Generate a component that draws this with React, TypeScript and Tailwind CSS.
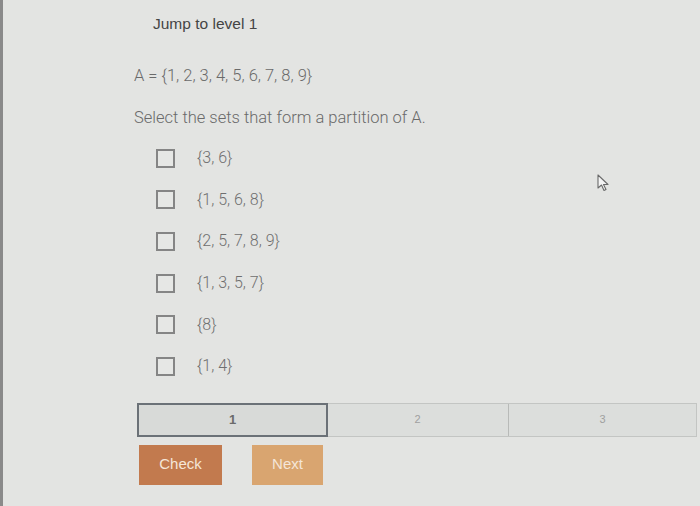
import React from "react";

const options = ["{3, 6}", "{1, 5, 6, 8}", "{2, 5, 7, 8, 9}", "{1, 3, 5, 7}", "{8}", "{1, 4}"];

export default function App() {
  return (
    <div className="relative w-[700px] h-[506px] overflow-hidden bg-[#e3e4e2] border-l-[3px] border-[#8a8a8a]">
      <div className="pl-[150px] pt-[12px] text-[15.5px] text-[#454545] font-['Liberation_Sans',Arial,sans-serif]">
        Jump to level 1
      </div>
      <div className="pl-[131px] pt-[29px] text-[16.5px] text-[#6a6a6a] font-['Roboto',sans-serif] font-light">
        A = {"{1, 2, 3, 4, 5, 6, 7, 8, 9}"}
      </div>
      <div className="pl-[131px] pt-[17px] text-[16.5px] text-[#6a6a6a] font-['Roboto',sans-serif] font-light">
        Select the sets that form a partition of A.
      </div>
      <div className="flex flex-col gap-[22.6px] pt-[18px] pl-[153px]">
        {options.map((o) => (
          <div key={o} className="flex items-center h-[19px]">
            <div className="w-[19px] h-[19px] border-2 border-[#858585] bg-[#e6e7e5]" />
            <span className="ml-[22px] text-[16px] text-[#6f6f6f] font-['Roboto',sans-serif] font-light">{o}</span>
          </div>
        ))}
      </div>
      <div className="flex ml-[134px] mt-[27px] w-[560px] h-[34px] bg-[#dcdedc] border border-[#c3c5c3]">
        <div className="w-[191px] -m-px h-[34px] border-2 border-[#6b7177] bg-[#d8dad8] flex items-center justify-center text-[13px] font-bold text-[#6a6a6a] font-['Liberation_Sans',Arial,sans-serif]">
          1
        </div>
        <div className="w-[182px] flex items-center justify-center border-r border-[#b8bab8] text-[11px] text-[#a0a0a0] font-['Liberation_Sans',Arial,sans-serif]">
          2
        </div>
        <div className="flex-1 flex items-center justify-center text-[11px] text-[#a0a0a0] font-['Liberation_Sans',Arial,sans-serif]">
          3
        </div>
      </div>
      <div className="flex ml-[136px] mt-[8px] gap-[30px] font-['Liberation_Sans',Arial,sans-serif] text-[15px] text-[#f5e6d8]">
        <div className="w-[83px] h-[40px] bg-[#c27a4e] flex items-center justify-center">Check</div>
        <div className="w-[71px] h-[40px] bg-[#d9a570] flex items-center justify-center">Next</div>
      </div>
      <svg className="absolute left-[594px] top-[174px]" width="14" height="18" viewBox="0 0 14 18">
        <path d="M1 1 L1 14 L4.5 11 L7 16.5 L9 15.5 L6.5 10.5 L11 10.5 Z" fill="#f4f4f4" stroke="#6a6a6a" strokeWidth="1.1" strokeLinejoin="round" />
      </svg>
    </div>
  );
}
